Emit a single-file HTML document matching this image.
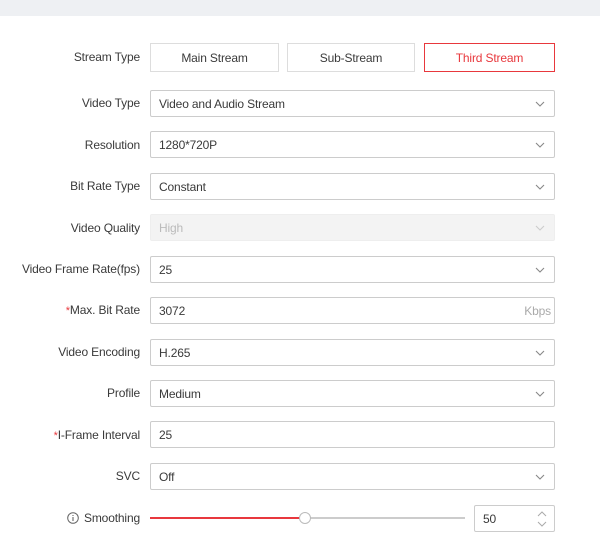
<!DOCTYPE html><html><head><style>
*{box-sizing:border-box;margin:0;padding:0}
body{width:600px;height:545px;background:#fff;font-family:"Liberation Sans",sans-serif;font-size:12px;color:#3a3a3a;position:relative;overflow:hidden;letter-spacing:-0.15px}
.top{position:absolute;left:0;top:0;width:600px;height:16px;background:#eef0f3}
.lbl{position:absolute;right:460px;width:140px;text-align:right;line-height:14px}
.lbl .s{color:#e8383d;font-size:11px}
.box{position:absolute;left:150px;width:405px;height:27px;border:1px solid #ccc;border-radius:2px;padding-left:8px;line-height:27px}
.box.dis{background:#f3f3f3;border-color:#eee;color:#bbb}
.chev{position:absolute;right:9px;top:10px;width:10px;height:6px}
.btn{position:absolute;top:43px;height:29px;border:1px solid #ddd;text-align:center;line-height:28px}
</style></head><body>
<div class="top"></div>
<div class="lbl" style="top:50px">Stream Type</div>
<div class="btn" style="left:150px;width:129px">Main Stream</div>
<div class="btn" style="left:287px;width:128px">Sub-Stream</div>
<div class="btn" style="left:424px;width:131px;border-color:#e8383d;color:#e8383d">Third Stream</div>

<div class="lbl" style="top:96px">Video Type</div>
<div class="box" style="top:90px">Video and Audio Stream<svg class="chev" viewBox="0 0 10 6"><path d="M1 1L5 5L9 1" fill="none" stroke="#888" stroke-width="1.1"/></svg></div>
<div class="lbl" style="top:138px">Resolution</div>
<div class="box" style="top:131px">1280*720P<svg class="chev" viewBox="0 0 10 6"><path d="M1 1L5 5L9 1" fill="none" stroke="#888" stroke-width="1.1"/></svg></div>
<div class="lbl" style="top:179px">Bit Rate Type</div>
<div class="box" style="top:173px">Constant<svg class="chev" viewBox="0 0 10 6"><path d="M1 1L5 5L9 1" fill="none" stroke="#888" stroke-width="1.1"/></svg></div>
<div class="lbl" style="top:221px">Video Quality</div>
<div class="box dis" style="top:214px">High<svg class="chev" viewBox="0 0 10 6"><path d="M1 1L5 5L9 1" fill="none" stroke="#ccc" stroke-width="1.1"/></svg></div>
<div class="lbl" style="top:262px">Video Frame Rate(fps)</div>
<div class="box" style="top:256px">25<svg class="chev" viewBox="0 0 10 6"><path d="M1 1L5 5L9 1" fill="none" stroke="#888" stroke-width="1.1"/></svg></div>
<div class="lbl" style="top:303px"><span class="s">*</span>Max. Bit Rate</div>
<div class="box" style="top:297px">3072<span style="position:absolute;right:3px;color:#aaa">Kbps</span></div>
<div class="lbl" style="top:345px">Video Encoding</div>
<div class="box" style="top:339px">H.265<svg class="chev" viewBox="0 0 10 6"><path d="M1 1L5 5L9 1" fill="none" stroke="#888" stroke-width="1.1"/></svg></div>
<div class="lbl" style="top:386px">Profile</div>
<div class="box" style="top:380px">Medium<svg class="chev" viewBox="0 0 10 6"><path d="M1 1L5 5L9 1" fill="none" stroke="#888" stroke-width="1.1"/></svg></div>
<div class="lbl" style="top:428px"><span class="s">*</span>I-Frame Interval</div>
<div class="box" style="top:421px">25</div>
<div class="lbl" style="top:469px">SVC</div>
<div class="box" style="top:463px">Off<svg class="chev" viewBox="0 0 10 6"><path d="M1 1L5 5L9 1" fill="none" stroke="#888" stroke-width="1.1"/></svg></div>
<div class="lbl" style="top:511px"><svg width="12" height="12" viewBox="0 0 12 12" style="vertical-align:-2px;margin-right:5px"><circle cx="6" cy="6" r="5.3" fill="none" stroke="#666"/><path d="M6 5V9M6 3V4" stroke="#666" stroke-width="1.1"/></svg>Smoothing</div>
<div style="position:absolute;left:150px;top:517px;width:155px;height:2px;background:#e8383d"></div>
<div style="position:absolute;left:305px;top:517px;width:160px;height:2px;background:#ccc"></div>
<div style="position:absolute;left:299px;top:512px;width:12px;height:12px;border-radius:50%;border:1px solid #bbb;background:#fff"></div>
<div class="box" style="top:505px;left:474px;width:81px;padding-left:8px">50<svg style="position:absolute;right:7px;top:5px" width="10" height="16" viewBox="0 0 10 16"><path d="M1 5L5 1L9 5M1 11L5 15L9 11" fill="none" stroke="#aaa" stroke-width="1"/></svg></div>
</body></html>
